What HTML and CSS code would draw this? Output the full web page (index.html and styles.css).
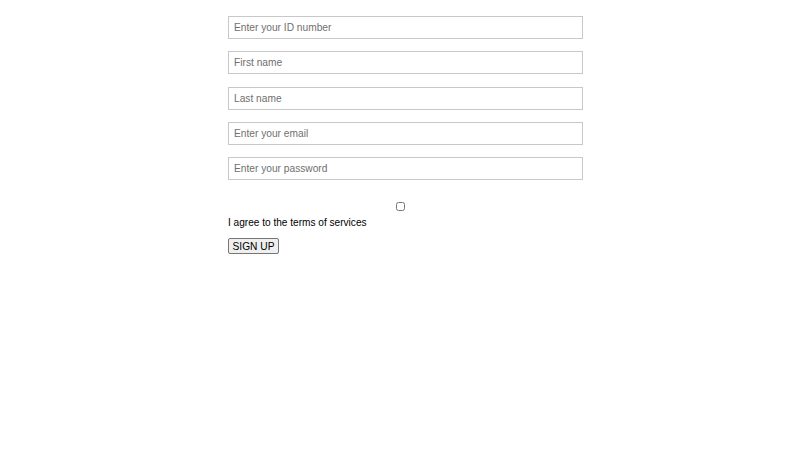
FILE: index.html
```html
<!DOCTYPE html>
<html>
<head>
<meta charset="utf-8">
<link rel="stylesheet" href="styles.css">
</head>
<body>
<form class="page">
  <div class="fields">
    <input class="field" type="text" placeholder="Enter your ID number">
    <input class="field" type="text" placeholder="First name">
    <input class="field" type="text" placeholder="Last name">
    <input class="field" type="email" placeholder="Enter your email">
    <input class="field" type="password" placeholder="Enter your password">
  </div>
  <div class="check-row"><input class="check" type="checkbox"></div>
  <div class="bottom">
    <div class="terms">I agree to the terms of services</div>
    <button class="btn" type="button">SIGN UP</button>
  </div>
</form>
</body>
</html>
```
FILE: styles.css
```css
html, body {
  margin: 0;
  padding: 0;
  background: #fff;
}
body {
  font-family: "Liberation Sans", Arial, sans-serif;
  font-size: 10px;
  color: #000;
}
.page {
  width: 800px;
  display: flex;
  flex-direction: column;
}
.fields {
  margin-left: 228px;
  width: 355px;
  padding-top: 16px;
  display: flex;
  flex-direction: column;
  gap: 12.25px;
}
.field {
  box-sizing: border-box;
  height: 23px;
  width: 355px;
  margin: 0;
  border: 1px solid #c8c8c8;
  padding: 0 5px;
  font-family: "Liberation Sans", Arial, sans-serif;
  font-size: 10.2px;
  color: #000;
  background: #fff;
  outline: none;
}
.field::placeholder {
  color: #6f6f6f;
}
.check-row {
  display: flex;
  justify-content: center;
  margin-top: 22px;
}
.check {
  width: 9px;
  height: 9px;
  margin: 0;
}
.bottom {
  margin-left: 228px;
  margin-top: 6px;
  display: flex;
  flex-direction: column;
  align-items: flex-start;
}
.terms {
  line-height: 12px;
  height: 12px;
  font-size: 10.1px;
}
.btn {
  margin-top: 9px;
  box-sizing: border-box;
  height: 16px;
  width: 51px;
  padding: 0;
  font-family: "Liberation Sans", Arial, sans-serif;
  font-size: 10.2px;
  color: #000;
  background: #efefef;
  border: 1px solid #767676;
  border-radius: 2px;
}
```
